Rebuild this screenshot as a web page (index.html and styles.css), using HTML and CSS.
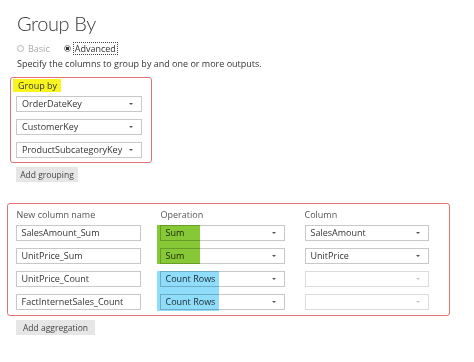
FILE: index.html
```html
<!DOCTYPE html>
<html lang="en">
<head>
    <meta charset="UTF-8">
    <meta name="viewport" content="width=device-width, initial-scale=1.0">
    <title>Group By</title>
    <link rel="stylesheet" href="styles.css">
</head>
<body>
    <div class="page">
        <h1 class="title">Group By</h1>
        <div class="mode">
            <span class="radio"><i></i>Basic</span>
            <span class="radio on"><i></i><span class="focus">Advanced</span></span>
        </div>
        <p class="hint">Specify the columns to group by and one or more outputs.</p>

        <div class="groupbox">
            <div class="marker">Group by</div>
            <div class="select">OrderDateKey<span class="caret"></span></div>
            <div class="select">CustomerKey<span class="caret"></span></div>
            <div class="select">ProductSubcategoryKey<span class="caret"></span></div>
        </div>
        <button class="btn grouping">Add grouping</button>

        <div class="aggbox">
            <div class="head">New column name</div>
            <div class="head">Operation</div>
            <div class="head">Column</div>

            <div class="field">SalesAmount_Sum</div>
            <div class="select green">Sum<span class="caret"></span></div>
            <div class="select">SalesAmount<span class="caret"></span></div>

            <div class="field">UnitPrice_Sum</div>
            <div class="select">Sum<span class="caret"></span></div>
            <div class="select">UnitPrice<span class="caret"></span></div>

            <div class="field">UnitPrice_Count</div>
            <div class="select blue">Count Rows<span class="caret"></span></div>
            <div class="select off"><span class="caret"></span></div>

            <div class="field">FactInternetSales_Count</div>
            <div class="select">Count Rows<span class="caret"></span></div>
            <div class="select off"><span class="caret"></span></div>
        </div>
        <button class="btn">Add aggregation</button>
    </div>
</body>
</html>
```

FILE: styles.css
```css
* {
    margin: 0;
    padding: 0;
    box-sizing: border-box;
}

body {
    background: #fff;
    font-family: 'Open Sans', 'Noto Sans', sans-serif;
    color: #333;
}

.page {
    padding: 8px 0 0 17px;
}

.title {
    font-family: 'Lato', sans-serif;
    font-size: 20px;
    font-weight: 300;
    line-height: 30px;
    color: #3a3a3a;
    letter-spacing: -0.4px;
}

.mode {
    display: flex;
    align-items: center;
    gap: 14px;
    margin-top: 3px;
    height: 14px;
    font-size: 9px;
}

.radio {
    display: flex;
    align-items: center;
    color: #a8a8a8;
}

.radio i {
    width: 7px;
    height: 7px;
    border: 1px solid #b5b5b5;
    border-radius: 50%;
    margin-right: 4px;
}

.radio.on {
    color: #333;
}

.radio.on i {
    border-color: #777;
    background: radial-gradient(circle, #333 1.6px, #fff 2px);
    margin-right: 2px;
}

.focus {
    border: 1px dotted #444;
    padding: 0 1px;
    line-height: 11px;
}

.hint {
    font-size: 9px;
    line-height: 14px;
    margin-top: 2px;
    color: #333;
}

.groupbox {
    width: 142px;
    margin: 6px 0 0 -7px;
    border: 1.5px solid #e27275;
    border-radius: 3px;
    padding: 1px 9px 4px 5px;
    display: flex;
    flex-direction: column;
    gap: 7px;
}

.marker {
    align-self: flex-start;
    margin-left: -3px;
    margin-bottom: -3px;
    background: #f8f51e;
    font-size: 9px;
    line-height: 13px;
    padding-left: 5px;
    width: 48px;
    white-space: nowrap;
    color: #333;
}

.select,
.field {
    position: relative;
    height: 16px;
    border: 1px solid #c8c8c8;
    background: #fff;
    font-size: 9px;
    line-height: 14px;
    padding-left: 5px;
    color: #333;
    white-space: nowrap;
}

.select .caret {
    position: absolute;
    right: 8px;
    top: 6px;
    border-left: 2px solid transparent;
    border-right: 2px solid transparent;
    border-top: 2px solid #555;
}

.select.off {
    border-color: #dcdcdc;
}

.select.off .caret {
    border-top-color: #c4c4c4;
}

/* highlight marks drawn over two rows of operations */
.select.green::after,
.select.blue::after {
    content: '';
    position: absolute;
    left: -4px;
    top: -1px;
    height: 39px;
    z-index: 1;
    mix-blend-mode: multiply;
}

.select.green::after {
    width: 43px;
    background: #86c835;
}

.select.blue::after {
    width: 62px;
    height: 40px;
    background: #8fdcfb;
}

.btn {
    display: block;
    border: none;
    background: #e6e6e6;
    font-family: inherit;
    font-size: 8.5px;
    color: #444;
    height: 15px;
    padding: 0 7px;
    margin-top: 4px;
    margin-left: -1px;
}

.btn.grouping {
    width: 62px;
    padding: 0;
}

.aggbox {
    width: 443px;
    margin: 21px 0 0 -10px;
    border: 1.5px solid #e27275;
    border-radius: 3px;
    padding: 4px 0 5px 7.5px;
    display: grid;
    grid-template-columns: 125px 125px 125px;
    column-gap: 19px;
    row-gap: 7px;
}

.head {
    font-size: 9px;
    line-height: 13px;
    color: #555;
    margin-bottom: -3px;
    padding-left: 1px;
}

.aggbox .select:nth-child(3n) {
    margin-left: 1px;
}
```
